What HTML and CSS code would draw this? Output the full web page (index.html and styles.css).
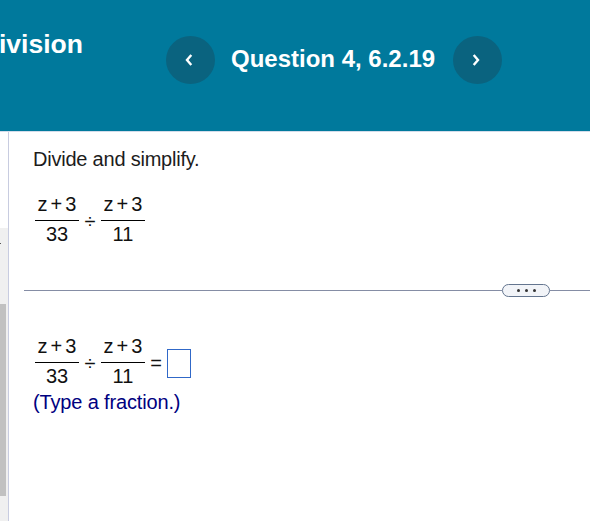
FILE: index.html
```html
<!DOCTYPE html>
<html lang="en">
<head>
<meta charset="utf-8">
<title>Question 4, 6.2.19</title>
<link rel="stylesheet" href="styles.css">
</head>
<body>
<header class="header">
  <div class="topic">ivision</div>
  <button class="nav" aria-label="Previous question"><svg width="8" height="12" viewBox="0 0 8 12"><path d="M6.3 1 2 6l4.3 5"/></svg></button>
  <h1 class="title">Question 4, 6.2.19</h1>
  <button class="nav" aria-label="Next question"><svg width="8" height="12" viewBox="0 0 8 12"><path d="M1.7 1 6 6l-4.3 5"/></svg></button>
</header>
<div class="body">
  <aside class="side"><div class="track"><div class="mark"></div><div class="thumb"></div></div></aside>
  <main class="content">
    <p class="prompt">Divide and simplify.</p>
    <div class="expr">
      <div class="frac"><span class="num">z<span class="plus">+</span>3</span><span class="den">33</span></div>
      <span class="op">÷</span>
      <div class="frac"><span class="num">z<span class="plus">+</span>3</span><span class="den">11</span></div>
    </div>
    <div class="divider"><span class="line"></span><button class="more" aria-label="More"><i></i><i></i><i></i></button><span class="line end"></span></div>
    <div class="expr">
      <div class="frac"><span class="num">z<span class="plus">+</span>3</span><span class="den">33</span></div>
      <span class="op">÷</span>
      <div class="frac"><span class="num">z<span class="plus">+</span>3</span><span class="den">11</span></div>
      <span class="op equals">=</span>
      <span class="answer"></span>
    </div>
    <p class="hint">(Type a fraction.)</p>
  </main>
</div>
</body>
</html>
```
FILE: styles.css
```css
* { box-sizing: border-box; }
body {
  margin: 0;
  height: 521px;
  overflow: hidden;
  background: #fff;
  color: #1c1c1c;
  font-family: "Liberation Sans", Arial, sans-serif;
}
.header {
  display: flex;
  height: 131px;
  padding-top: 35px;
  background: #00799c;
  color: #fff;
}
.topic {
  width: 166px;
  margin-top: -6px;
  font-size: 26.5px;
  line-height: 30px;
  font-weight: bold;
  text-indent: -1px;
}
.nav {
  display: flex;
  align-items: center;
  justify-content: center;
  width: 49px;
  height: 48px;
  margin-top: 1px;
  padding: 0 3px 0 0;
  border: 0;
  border-radius: 50%;
  background: #0a637f;
}
.nav path { fill: none; stroke: #fff; stroke-width: 2.4; }
.title {
  width: 206px;
  margin: 0 16px;
  font-size: 24px;
  line-height: 48px;
  white-space: nowrap;
}
.body { display: flex; height: 390px; border-top: 1px solid #d3dcea; }
.side { width: 9px; padding-top: 96px; border-right: 1px solid #c8cce0; }
.track { height: 293px; background: #f0f0f0; padding-top: 15px; }
.mark { width: 1px; height: 1px; background: #555; }
.thumb { width: 6px; height: 192px; margin-top: 60px; background: #c1c1c1; }
.content { flex: 1; padding-top: 15px; font-size: 20px; }
.prompt, .hint {
  margin: 0 0 0 24px;
  line-height: 24px;
  letter-spacing: -0.22px;
}
.hint { color: #00007f; margin-top: 1px; letter-spacing: -0.15px; }
.expr { display: flex; height: 56px; margin-left: 26px; color: #111; }
.prompt + .expr { margin-top: 20px; }
.frac { width: 44px; text-align: center; }
.num, .den { display: block; line-height: 26px; }
.num { height: 30px; border-bottom: 1px solid #000; }
.plus { margin: 0 3px; }
.op { width: 22px; text-align: center; line-height: 60px; }
.divider { display: flex; align-items: center; height: 14px; margin: 36px 0 36px 15px; }
.line { flex: 1; height: 1px; background: #858da5; }
.end { flex: 0 0 40px; }
.more {
  display: flex;
  align-items: center;
  justify-content: center;
  gap: 5px;
  width: 48px;
  height: 13px;
  padding: 0;
  border: 1px solid #64758f;
  border-radius: 7px;
  background: #f2f4f8;
}
.more i { width: 3px; height: 3px; border-radius: 50%; background: #333; }
.answer { width: 24px; height: 29px; margin-top: 16px; border: 1px solid #3068c8; }
```
